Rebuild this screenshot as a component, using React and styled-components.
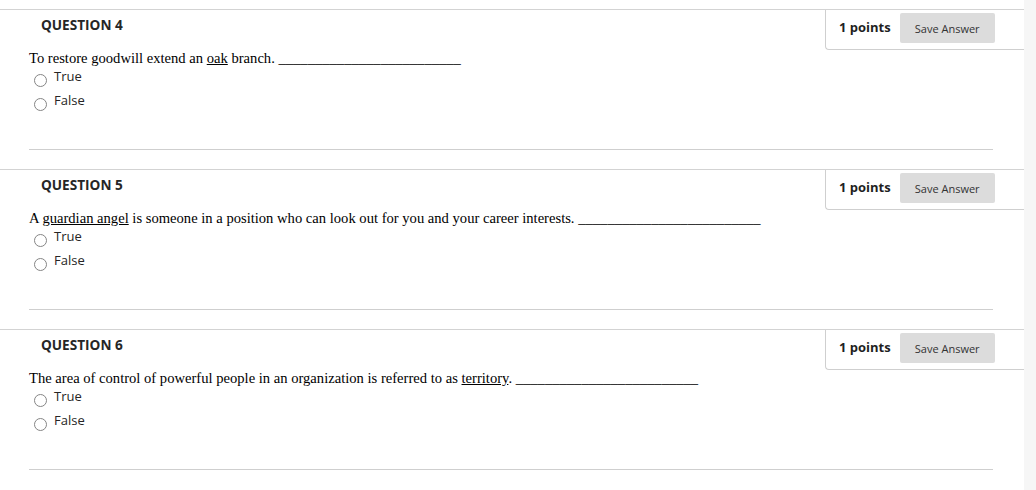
import React from 'react'
import styled, { createGlobalStyle } from 'styled-components'

const GlobalStyle = createGlobalStyle`
  html, body {
    margin: 0;
    padding: 0;
    background: #ffffff;
  }
`

const Page = styled.div`
  display: flex;
  width: 1036px;
  min-height: 490px;
`

const Main = styled.div`
  width: 1024px;
  padding-top: 9px;
`

const SideStrip = styled.div`
  flex: 1;
  background: #f6f6f6;
`

const Question = styled.div`
  display: flex;
  flex-direction: column;
  height: 160px;
  box-sizing: border-box;
  border-top: 1px solid #d3d3d3;
`

const Header = styled.div`
  display: flex;
  justify-content: space-between;
  align-items: flex-start;
  height: 40px;
`

const Title = styled.h3`
  margin: 0;
  padding: 6px 0 0 41px;
  font-family: 'Open Sans', 'Liberation Sans', sans-serif;
  font-size: 13.6px;
  font-weight: 700;
  line-height: 18px;
  color: #262626;
`

const PointsBox = styled.div`
  display: flex;
  align-items: flex-start;
  gap: 9px;
  width: 199px;
  height: 40px;
  box-sizing: border-box;
  padding: 3px 0 0 13px;
  border-left: 1px solid #cfcfcf;
  border-bottom: 1px solid #cfcfcf;
  border-bottom-left-radius: 4px;
`

const Points = styled.span`
  font-family: 'Open Sans', 'Liberation Sans', sans-serif;
  font-size: 13px;
  font-weight: 700;
  line-height: 28px;
  color: #1f1f1f;
`

const SaveButton = styled.button`
  width: 95px;
  height: 30px;
  border: none;
  border-radius: 2px;
  background: #dcdcdc;
  font-family: 'Open Sans', 'Liberation Sans', sans-serif;
  font-size: 11px;
  color: #333333;
  padding: 0;
`

const Body = styled.div`
  padding: 1px 0 0 29px;
`

const Prompt = styled.p`
  margin: 0;
  font-family: 'Liberation Serif', 'Times New Roman', serif;
  font-size: 14.6px;
  line-height: 14px;
  color: #000000;
  white-space: nowrap;
`

const Term = styled.span`
  text-decoration: underline;
`

const Options = styled.div`
  display: flex;
  flex-direction: column;
`

const Option = styled.label`
  display: flex;
  align-items: center;
  height: 24px;
  margin-top: -1px;
  margin-bottom: 1px;
  font-family: 'Open Sans', 'Liberation Sans', sans-serif;
  font-size: 13px;
  color: #262626;
`

const Radio = styled.input.attrs({ type: 'radio' })`
  appearance: none;
  width: 13px;
  height: 13px;
  margin: 0 7px 0 5px;
  border: 1px solid #858585;
  border-radius: 50%;
  background: #ffffff;
  position: relative;
  top: 4px;
`

const Separator = styled.hr`
  margin: auto 31px 19px 29px;
  border: none;
  border-top: 1px solid #cfcfcf;
  height: 0;
`

const BLANK = '_________________________'

const questions = [
  {
    id: 4,
    prompt: (
      <>
        To restore goodwill extend an <Term>oak</Term> branch.
      </>
    ),
  },
  {
    id: 5,
    prompt: (
      <>
        A <Term>guardian angel</Term> is someone in a position who can look out for you and your career interests.
      </>
    ),
  },
  {
    id: 6,
    prompt: (
      <>
        The area of control of powerful people in an organization is referred to as <Term>territory</Term>.
      </>
    ),
  },
]

function QuestionBlock({ q }) {
  return (
    <Question>
      <Header>
        <Title>QUESTION {q.id}</Title>
        <PointsBox>
          <Points>1 points</Points>
          <SaveButton>Save Answer</SaveButton>
        </PointsBox>
      </Header>
      <Body>
        <Prompt>
          {q.prompt} {BLANK}
        </Prompt>
        <Options>
          <Option>
            <Radio name={`q${q.id}`} />
            True
          </Option>
          <Option>
            <Radio name={`q${q.id}`} />
            False
          </Option>
        </Options>
      </Body>
      <Separator />
    </Question>
  )
}

export default function App() {
  return (
    <Page>
      <GlobalStyle />
      <Main>
        {questions.map((q) => (
          <QuestionBlock key={q.id} q={q} />
        ))}
      </Main>
      <SideStrip />
    </Page>
  )
}
